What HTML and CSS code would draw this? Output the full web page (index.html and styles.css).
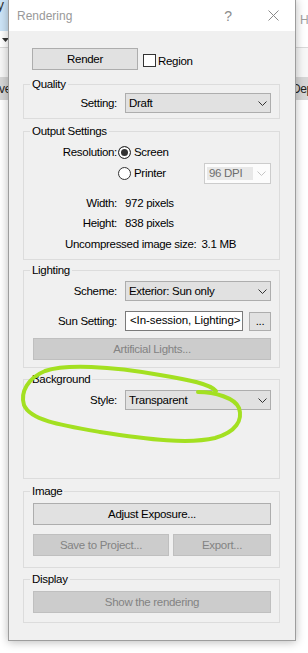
FILE: index.html
```html
<!DOCTYPE html>
<html lang="en">
<head>
  <meta charset="UTF-8" />
  <title>Rendering</title>
  <link rel="stylesheet" href="styles.css">
</head>
<body>

  <!-- app window behind the dialog -->
  <div class="app">
    <div class="ribbon">
      <span class="tab">y</span>
      <span class="ribbon-label">H</span>
    </div>
    <div class="toolbar">
      <svg class="drop" width="7" height="4" viewBox="0 0 7 4"><path d="M0 0H7L3.5 4Z" fill="#333"/></svg>
    </div>
    <div class="panel"></div>
    <div class="columns">
      <span class="col-left">ve</span>
      <span class="col-right">Dep</span>
    </div>
  </div>

  <!-- Rendering dialog -->
  <div class="dialog">
    <div class="titlebar">
      <span class="title">Rendering</span>
      <span class="help">?</span>
      <svg class="close" width="11" height="11" viewBox="0 0 11 11">
        <path d="M0.5 0.5L10.5 10.5M10.5 0.5L0.5 10.5" stroke="#8a8a8a" stroke-width="1"/>
      </svg>
    </div>

    <div class="dialog-body">
      <div class="render-row">
        <button class="btn render-btn">Render</button>
        <span class="checkbox"></span>
        <span class="check-label">Region</span>
      </div>

      <fieldset class="group quality">
        <legend>Quality</legend>
        <div class="row">
          <span class="label">Setting:</span>
          <div class="select"><span class="select-text">Draft</span><svg class="chev" width="9" height="5" viewBox="0 0 9 5"><path d="M0.5 0.5L4.5 4.5L8.5 0.5" fill="none" stroke="#333"/></svg></div>
        </div>
      </fieldset>

      <fieldset class="group output">
        <legend>Output Settings</legend>
        <div class="row">
          <span class="label">Resolution:</span>
          <span class="radio checked"></span>
          <span class="opt">Screen</span>
        </div>
        <div class="row printer-row">
          <span class="label"></span>
          <span class="radio"></span>
          <span class="opt">Printer</span>
          <div class="select dpi"><span class="select-text">96 DPI</span><svg class="chev" width="9" height="5" viewBox="0 0 9 5"><path d="M0.5 0.5L4.5 4.5L8.5 0.5" fill="none" stroke="#c4c4c4"/></svg></div>
        </div>
        <div class="row width-row">
          <span class="label">Width:</span>
          <span class="value">972 pixels</span>
        </div>
        <div class="row">
          <span class="label">Height:</span>
          <span class="value">838 pixels</span>
        </div>
        <div class="row size-row">
          <span>Uncompressed image size:</span>
          <span class="size-value">3.1 MB</span>
        </div>
      </fieldset>

      <fieldset class="group lighting">
        <legend>Lighting</legend>
        <div class="row">
          <span class="label">Scheme:</span>
          <div class="select"><span class="select-text">Exterior: Sun only</span><svg class="chev" width="9" height="5" viewBox="0 0 9 5"><path d="M0.5 0.5L4.5 4.5L8.5 0.5" fill="none" stroke="#333"/></svg></div>
        </div>
        <div class="row sun-row">
          <span class="label">Sun Setting:</span>
          <span class="textbox">&lt;In-session, Lighting&gt;</span>
          <button class="btn dots">...</button>
        </div>
        <button class="btn wide disabled lights-btn">Artificial Lights...</button>
      </fieldset>

      <fieldset class="group background">
        <legend>Background</legend>
        <div class="row">
          <span class="label">Style:</span>
          <div class="select"><span class="select-text">Transparent</span><svg class="chev" width="9" height="5" viewBox="0 0 9 5"><path d="M0.5 0.5L4.5 4.5L8.5 0.5" fill="none" stroke="#333"/></svg></div>
        </div>
      </fieldset>

      <fieldset class="group image">
        <legend>Image</legend>
        <button class="btn wide">Adjust Exposure...</button>
        <div class="btn-row">
          <button class="btn disabled save-btn">Save to Project...</button>
          <button class="btn disabled export-btn">Export...</button>
        </div>
      </fieldset>

      <fieldset class="group display">
        <legend>Display</legend>
        <button class="btn wide disabled">Show the rendering</button>
      </fieldset>
    </div>
  </div>

  <!-- green marker drawn over the screenshot -->
  <svg class="scribble" width="308" height="653" viewBox="0 0 308 653">
    <path d="M198 392 C215 392 235 398 239 408 C243 420 236 432 215 438 C190 444 150 440 100 432 C60 425 30 420 24 405 C20 392 28 378 45 371 C65 364 110 366 160 375 C190 380 210 384 216 391"
          fill="none" stroke="#a3e021" stroke-width="4" stroke-linecap="round" stroke-linejoin="round"/>
  </svg>

</body>
</html>
```

FILE: styles.css
```css
* {
  box-sizing: border-box;
}

body {
  margin: 0;
  width: 308px;
  height: 653px;
  overflow: hidden;
  position: relative;
  background: #fff;
  font-family: "Liberation Sans", Arial, sans-serif;
  font-size: 11.5px;
  letter-spacing: -0.3px;
  color: #000;
}

/* app behind */
.ribbon {
  height: 31px;
  display: flex;
  justify-content: space-between;
}

.tab {
  width: 9px;
  background: #cce4f7;
  overflow: hidden;
  font-size: 14px;
  line-height: 10px;
  color: #333;
  text-indent: -3px;
}

.ribbon-label {
  width: 8px;
  padding-top: 13px;
  font-size: 12px;
  color: #a0a0a0;
  overflow: hidden;
}

.toolbar {
  height: 17px;
  border-bottom: 1px solid #d9d9d9;
  padding: 7px 0 0 2px;
}

.drop {
  display: block;
}

.panel {
  height: 29px;
  background: #f7f7f7;
}

.columns {
  height: 23px;
  background: #d6d6d6;
  display: flex;
  justify-content: space-between;
  align-items: center;
  font-size: 12px;
  color: #222;
}

.col-left {
  margin-left: -1px;
}

.col-right {
  margin-right: -5px;
}

/* dialog window */
.dialog {
  position: absolute;
  left: 8px;
  top: -1px;
  width: 288px;
  height: 642px;
  border: 1px solid #9d9d9d;
  background: #f0f0f0;
  box-shadow: 0 1px 9px rgba(0, 0, 0, 0.28);
}

.titlebar {
  height: 31px;
  background: #fff;
  display: flex;
  align-items: center;
  padding: 0 16px 0 8px;
  font-size: 12px;
  letter-spacing: 0;
  color: #999;
}

.title {
  flex: 1;
}

.help {
  font-size: 14px;
  color: #8c8c8c;
  margin-right: 36px;
}

.close {
  display: block;
}

.dialog-body {
  padding: 0 15px 0 14px;
}

.render-row {
  display: flex;
  align-items: flex-start;
  margin: 17px 0 0 9px;
}

.btn {
  font: inherit;
  letter-spacing: inherit;
  height: 22px;
  padding: 0;
  background: #e1e1e1;
  border: 1px solid #adadad;
  color: #000;
}

.btn.disabled {
  background: #cccccc;
  border-color: #bfbfbf;
  color: #838383;
}

.render-btn {
  width: 106px;
}

.checkbox {
  width: 13px;
  height: 13px;
  border: 1px solid #333;
  background: #fff;
  margin: 6px 0 0 5px;
}

.check-label {
  margin: 6px 0 0 2px;
  line-height: 15px;
}

/* group boxes */
.group {
  margin: 4px 0 0;
  padding: 3px 8px 5px 9px;
  border: 1px solid #dcdcdc;
  min-width: 0;
}

.group legend {
  padding: 0 2px;
  margin-left: -3px;
  line-height: 16px;
}

.quality {
  margin-top: 6px;
  padding-top: 1px;
}

.lighting {
  margin-top: 2px;
  padding-bottom: 7px;
}

.background {
  margin-top: 3px;
  padding-bottom: 68px;
}

.image {
  padding-top: 4px;
  padding-bottom: 11px;
}

.display {
  margin-top: 3px;
  padding-top: 4px;
  padding-bottom: 9px;
}

.row {
  display: flex;
  align-items: center;
  height: 20px;
}

.label {
  width: 84px;
  flex: none;
  text-align: right;
}

.select {
  flex: 1;
  height: 20px;
  margin-left: 8px;
  background: #e1e1e1;
  border: 1px solid #adadad;
  display: flex;
  align-items: center;
  padding: 0 3px 0 3px;
}

.select-text {
  flex: 1;
  white-space: nowrap;
}

.chev {
  display: block;
}

.select.dpi {
  flex: none;
  width: 67px;
  height: 21px;
  margin-left: auto;
  background: #fcfcfc;
  border-color: #cccccc;
  color: #6d6d6d;
  padding: 0 4px 0 2px;
}

.dpi .select-text {
  flex: none;
  width: 46px;
  margin-right: auto;
  background: #e8e8e8;
  line-height: 13px;
  padding-left: 2px;
}

.radio {
  width: 13px;
  height: 13px;
  border: 1px solid #333;
  border-radius: 50%;
  background: #fff;
  margin: 0 3px 0 1px;
  flex: none;
}

.radio.checked {
  background: #333;
  box-shadow: inset 0 0 0 2px #fff;
}

.printer-row {
  margin-top: 1px;
}

.width-row {
  margin-top: 10px;
}

.value {
  margin-left: 8px;
}

.size-row {
  margin-top: 1px;
  padding-left: 32px;
}

.size-value {
  margin-left: 5px;
}

.sun-row {
  margin-top: 10px;
}

.textbox {
  width: 118px;
  height: 20px;
  margin-left: 8px;
  background: #fff;
  border: 1px solid #7a7a7a;
  padding: 2px 0 0 4px;
  letter-spacing: -0.1px;
  white-space: nowrap;
  overflow: hidden;
}

.dots {
  width: 22px;
  height: 19px;
  margin-left: 6px;
  line-height: 12px;
}

.wide {
  display: block;
  width: 100%;
}

.lights-btn {
  margin-top: 7px;
}

.btn-row {
  display: flex;
  margin-top: 9px;
}

.save-btn {
  width: 136px;
}

.export-btn {
  flex: 1;
  margin-left: 4px;
}

/* marker overlay */
.scribble {
  position: absolute;
  left: 0;
  top: 0;
  pointer-events: none;
}
```
